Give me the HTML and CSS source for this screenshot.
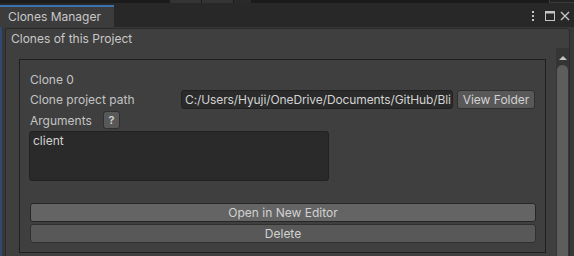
FILE: index.html
```html
<!DOCTYPE html>
<html>
<head>
<meta charset="utf-8">
<link rel="stylesheet" href="styles.css">
</head>
<body>
<div class="toolbar">
  <div class="tb-gap"></div>
  <div class="tb-btn"></div>
  <div class="tb-btn"></div>
  <div class="tb-btn dark"></div>
  <div class="tb-fill"></div>
  <div class="tb-box"></div>
</div>
<div class="tabbar">
  <div class="tab">Clones Manager</div>
  <div class="tab-icons">
    <svg class="ico" width="4" height="12" viewBox="0 0 4 12"><rect x="1" y="1" width="2" height="2" fill="#c4c4c4"/><rect x="1" y="5" width="2" height="2" fill="#c4c4c4"/><rect x="1" y="9" width="2" height="2" fill="#c4c4c4"/></svg>
    <svg class="ico" width="10" height="10" viewBox="0 0 10 10"><rect x="0.5" y="0.5" width="9" height="9" fill="none" stroke="#c4c4c4"/><rect x="0" y="0" width="10" height="2.5" fill="#c4c4c4"/></svg>
    <svg class="ico" width="10" height="10" viewBox="0 0 10 10"><path d="M1 1 L9 9 M9 1 L1 9" stroke="#c4c4c4" stroke-width="1.4"/></svg>
  </div>
</div>
<div class="window">
  <div class="group">
    <div class="group-title">Clones of this Project</div>
    <div class="group-body">
      <div class="clone-box">
        <div class="row label-only">Clone 0</div>
        <div class="row">
          <div class="label">Clone project path</div>
          <div class="field">C:/Users/Hyuji/OneDrive/Documents/GitHub/Bli</div>
          <div class="btn small">View Folder</div>
        </div>
        <div class="row args">
          <div class="args-label">Arguments</div>
          <div class="btn help">?</div>
        </div>
        <div class="textarea">client</div>
        <div class="btn wide hover">Open in New Editor</div>
        <div class="btn wide">Delete</div>
      </div>
      <div class="scrollbar">
        <div class="arrow"></div>
        <div class="thumb"></div>
      </div>
    </div>
  </div>
</div>
</body>
</html>
```
FILE: styles.css
```css
* { box-sizing: border-box; }
html, body { margin: 0; padding: 0; }
body {
  width: 574px;
  height: 256px;
  overflow: hidden;
  background: #282828;
  font-family: Inter, "Noto Sans", sans-serif;
  font-size: 12px;
  color: #c4c4c4;
}
.toolbar {
  height: 3px;
  display: flex;
  background: #1b1b1b;
}
.tb-gap { width: 170px; }
.tb-btn { width: 31px; margin-right: 1px; background: #343434; }
.tb-btn.dark { width: 17px; background: #2a2a2a; }
.tb-fill { flex: 1; }
.tb-box { width: 25px; border-left: 1px solid #3a3a3a; border-bottom: 1px solid #3a3a3a; background: #222; }
.tabbar {
  height: 24px;
  padding-top: 2px;
  display: flex;
  background: #282828;
}
.tab {
  width: 114px;
  height: 22px;
  background: #3c3c3c;
  border-top: 2px solid #3a72b0;
  padding-left: 8px;
  line-height: 19px;
  color: #c8c8c8;
}
.tab-icons {
  flex: 1;
  display: flex;
  justify-content: flex-end;
  align-items: flex-start;
  padding-top: 4px;
  padding-right: 4px;
}
.tab-icons .ico { display: block; }
.tab-icons .ico:nth-child(1) { margin-right: 10px; margin-top: 1px; }
.tab-icons .ico:nth-child(2) { margin-top: 2px; margin-right: 5px; }
.tab-icons .ico:nth-child(3) { margin-top: 2px; }
.window {
  height: 229px;
  background: #383838;
  border-left: 2px solid #2f4a70;
  padding: 1px 4px 0 3px;
}
.group {
  height: 240px;
  background: #3f3f3f;
  border: 1px solid #2a2a2a;
  border-radius: 3px;
}
.group-title {
  height: 19px;
  padding-left: 5px;
  line-height: 19px;
  color: #c8c8c8;
}
.group-body {
  display: flex;
  align-items: flex-start;
}
.clone-box {
  margin-top: 11px;
  margin-left: 13px;
  width: 527px;
  height: 194px;
  border: 1px solid #1f1f1f;
  padding: 9px 9px 0 9px;
  display: flex;
  flex-direction: column;
}
.row {
  display: flex;
  align-items: center;
  height: 21px;
  padding-left: 1px;
}
.label-only { height: 20px; }
.row.args { height: 20px; }
.label { width: 151px; }
.field {
  width: 272px;
  height: 19px;
  background: #2a2a2a;
  border: 1px solid #212121;
  border-radius: 3px;
  padding-left: 3px;
  line-height: 17px;
  white-space: nowrap;
  overflow: hidden;
  letter-spacing: -0.1px;
  color: #d2d2d2;
}
.btn {
  background: #585858;
  border: 1px solid #303030;
  border-radius: 3px;
  color: #d2d2d2;
  text-align: center;
}
.btn.small {
  width: 78px;
  height: 19px;
  margin-left: 4px;
  line-height: 17px;
}
.args-label { width: 73px; }
.btn.help {
  width: 17px;
  height: 18px;
  line-height: 16px;
  font-size: 11px;
  font-weight: 600;
}
.textarea {
  width: 300px;
  height: 50px;
  margin-top: 1px;
  background: #2a2a2a;
  border: 1px solid #212121;
  border-radius: 3px;
  padding: 2px 3px;
  line-height: 14px;
  color: #d2d2d2;
}
.btn.wide {
  margin-left: 1px;
  height: 19px;
  line-height: 17px;
}
.btn.hover { margin-top: 22px; background: #646464; border-color: #262626; }
.btn.wide + .btn.wide { margin-top: 2px; }
.scrollbar {
  margin-left: 10px;
  width: 13px;
  height: 220px;
  background: #353535;
  display: flex;
  flex-direction: column;
  align-items: center;
}
.arrow {
  margin-top: 8px;
  width: 0;
  height: 0;
  border-left: 4px solid transparent;
  border-right: 4px solid transparent;
  border-bottom: 4px solid #c4c4c4;
}
.thumb {
  margin-top: 5px;
  width: 11px;
  flex: 1;
  background: #5d5d5d;
  border-radius: 6px 6px 0 0;
}
```
